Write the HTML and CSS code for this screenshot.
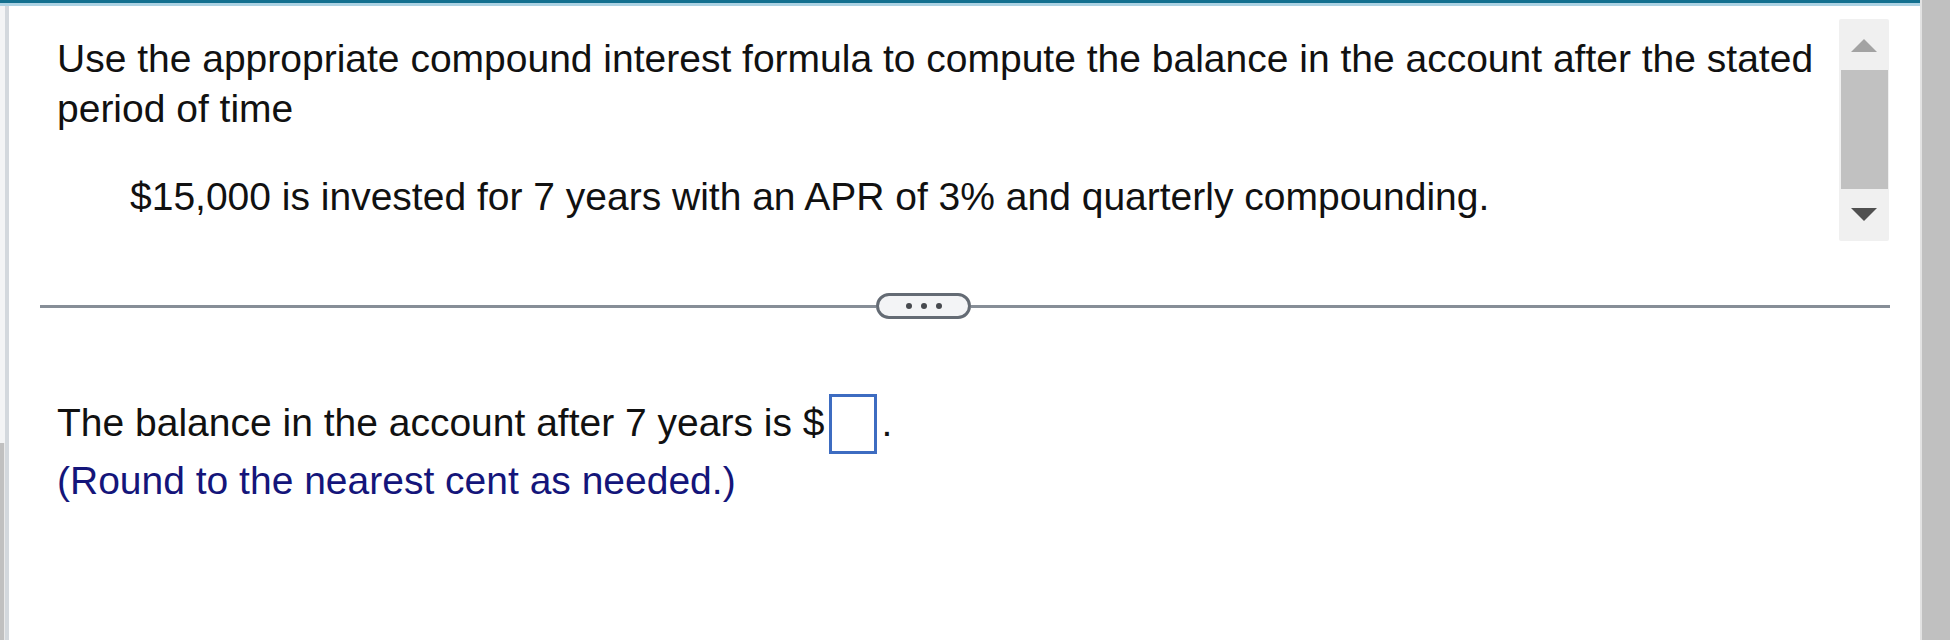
FILE: index.html
```html
<!DOCTYPE html>
<html lang="en">
<head>
<meta charset="utf-8">
<title>Compound interest</title>
<link rel="stylesheet" href="styles.css">
</head>
<body>
<div class="page">
  <div class="main">
    <div class="topbar"></div>
    <div class="body">
      <div class="leftrail"><div class="rail-top"></div><div class="rail-bottom"></div></div>
      <div class="content">
        <section class="question">
          <div class="qtext">
            <p class="prompt">Use the appropriate compound interest formula to compute the balance in the account after the stated period of time</p>
            <p class="given">$15,000 is invested for 7 years with an APR of 3% and quarterly compounding.</p>
          </div>
          <div class="scrollbar">
            <span class="arrow-up"></span>
            <span class="thumb"></span>
            <span class="arrow-down"></span>
          </div>
        </section>
        <div class="divider">
          <span class="rule rule-left"></span>
          <span class="more"><i class="dot"></i><i class="dot"></i><i class="dot"></i></span>
          <span class="rule rule-right"></span>
        </div>
        <section class="answer">
          <p class="answer-line">The balance in the account after 7 years is $<span class="input"></span>.</p>
          <p class="hint">(Round to the nearest cent as needed.)</p>
        </section>
      </div>
    </div>
  </div>
  <div class="rightrail"></div>
</div>
</body>
</html>
```
FILE: styles.css
```css
html, body {
  margin: 0;
  padding: 0;
  background: #ffffff;
}
body {
  font-family: "Liberation Sans", Arial, sans-serif;
  color: #111111;
}
.page {
  display: flex;
  width: 1950px;
  height: 640px;
  overflow: hidden;
}
.main {
  width: 1920px;
  display: flex;
  flex-direction: column;
}
.topbar {
  height: 3px;
  background: #12708f;
  border-bottom: 3px solid #acd2e3;
}
.body {
  flex: 1;
  display: flex;
}
.leftrail {
  width: 9px;
  display: flex;
  flex-direction: column;
}
.rail-top {
  height: 437px;
  background: linear-gradient(to right, #f3f4f5 0, #f3f4f5 5px, #d3d8dd 5px, #d3d8dd 9px);
}
.rail-bottom {
  flex: 1;
  background: linear-gradient(to right, #c0c0c0 0, #c0c0c0 4px, #e9e9e9 4px, #e9e9e9 5px, #d3d8dd 5px, #d3d8dd 9px);
}
.content {
  flex: 1;
  display: flex;
  flex-direction: column;
}
.question {
  display: flex;
  align-items: flex-start;
  height: 287px;
  padding-left: 48px;
}
.qtext {
  width: 1772px;
  padding-top: 28px;
  font-size: 39px;
  line-height: 50px;
}
.prompt {
  margin: 0;
}
.given {
  margin: 38px 0 0 0;
  padding-left: 73px;
}
.scrollbar {
  margin-top: 13px;
  margin-left: 10px;
  width: 50px;
  height: 222px;
  background: #f0f0f0;
  border-radius: 2px;
  display: flex;
  flex-direction: column;
  align-items: center;
}
.arrow-up {
  margin-top: 20px;
  width: 0;
  height: 0;
  border-left: 13px solid transparent;
  border-right: 13px solid transparent;
  border-bottom: 13px solid #a3a3a3;
}
.thumb {
  margin-top: 18px;
  align-self: stretch;
  margin-left: 2px;
  margin-right: 1px;
  height: 119px;
  background: #c1c1c1;
}
.arrow-down {
  margin-top: 19px;
  width: 0;
  height: 0;
  border-left: 13px solid transparent;
  border-right: 13px solid transparent;
  border-top: 13px solid #505050;
}
.divider {
  display: flex;
  align-items: center;
  height: 26px;
  margin: 0 30px 0 31px;
}
.rule {
  height: 3px;
  background: #878e97;
}
.rule-left {
  width: 836px;
}
.rule-right {
  flex: 1;
}
.more {
  box-sizing: border-box;
  width: 95px;
  height: 26px;
  border: 3px solid #646b74;
  border-radius: 13px;
  background: #f3f4f6;
  display: flex;
  align-items: center;
  justify-content: center;
  gap: 9px;
}
.dot {
  width: 6px;
  height: 6px;
  border-radius: 50%;
  background: #474a4f;
}
.answer {
  margin-top: 75px;
  padding-left: 48px;
  font-size: 39px;
  line-height: 47px;
}
.answer-line {
  margin: 0;
}
.input {
  display: inline-block;
  box-sizing: border-box;
  width: 48px;
  height: 60px;
  margin: 0 4px 0 5px;
  border: 3px solid #3d6cc1;
  vertical-align: -18px;
}
.hint {
  margin: 3px 0 0 0;
  color: #14157a;
}
.rightrail {
  flex: 1;
  background: #c0c0c0;
  border-left: 2px solid #e2e2e2;
}
```
